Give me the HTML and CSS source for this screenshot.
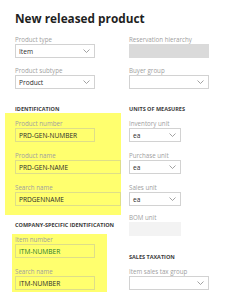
FILE: index.html
```html
<!DOCTYPE html>
<html>
<head>
<meta charset="utf-8">
<link rel="stylesheet" href="styles.css">
</head>
<body>
<div class="page">
  <h1 class="title">New released product</h1>
  <div class="cols">
    <div class="col left">
      <div class="field">
        <div class="label">Product type</div>
        <div class="box w80"><span>Item</span><svg class="chev" width="7" height="4" viewBox="0 0 7 4"><polyline points="0.5,0.5 3.5,3.5 6.5,0.5"/></svg></div>
      </div>
      <div class="field gap9">
        <div class="label">Product subtype</div>
        <div class="box w80"><span>Product</span><svg class="chev" width="7" height="4" viewBox="0 0 7 4"><polyline points="0.5,0.5 3.5,3.5 6.5,0.5"/></svg></div>
      </div>
      <div class="hdr hdr-first">IDENTIFICATION</div>
      <div class="hl hl-main">
        <div class="field">
          <div class="label">Product number</div>
          <div class="box hbox w80"><span>PRD-GEN-NUMBER</span></div>
        </div>
        <div class="field">
          <div class="label">Product name</div>
          <div class="box hbox w106"><span>PRD-GEN-NAME</span></div>
        </div>
        <div class="field">
          <div class="label">Search name</div>
          <div class="box hbox w106"><span>PRDGENNAME</span></div>
        </div>
      </div>
      <div class="hdr hdr-company">COMPANY-SPECIFIC IDENTIFICATION</div>
      <div class="hl hl-company">
        <div class="field">
          <div class="label">Item number</div>
          <div class="box hbox w80"><span class="green">ITM-NUMBER</span></div>
        </div>
        <div class="field">
          <div class="label">Search name</div>
          <div class="box hbox w80"><span>ITM-NUMBER</span></div>
        </div>
      </div>
    </div>
    <div class="col right">
      <div class="field">
        <div class="label">Reservation hierarchy</div>
        <div class="box w80 disabled"></div>
      </div>
      <div class="field gap9">
        <div class="label">Buyer group</div>
        <div class="box w80"><span></span><svg class="chev" width="7" height="4" viewBox="0 0 7 4"><polyline points="0.5,0.5 3.5,3.5 6.5,0.5"/></svg></div>
      </div>
      <div class="hdr hdr-first">UNITS OF MEASURES</div>
      <div class="units">
        <div class="field">
          <div class="label">Inventory unit</div>
          <div class="box w52"><span>ea</span><svg class="chev" width="7" height="4" viewBox="0 0 7 4"><polyline points="0.5,0.5 3.5,3.5 6.5,0.5"/></svg></div>
        </div>
        <div class="field">
          <div class="label">Purchase unit</div>
          <div class="box w52"><span>ea</span><svg class="chev" width="7" height="4" viewBox="0 0 7 4"><polyline points="0.5,0.5 3.5,3.5 6.5,0.5"/></svg></div>
        </div>
        <div class="field">
          <div class="label">Sales unit</div>
          <div class="box w52"><span>ea</span><svg class="chev" width="7" height="4" viewBox="0 0 7 4"><polyline points="0.5,0.5 3.5,3.5 6.5,0.5"/></svg></div>
        </div>
        <div class="field bom">
          <div class="label">BOM unit</div>
          <div class="box w52 readonly"></div>
        </div>
      </div>
      <div class="hdr hdr-tax">SALES TAXATION</div>
      <div class="field tax">
        <div class="label">Item sales tax group</div>
        <div class="box w80"><span></span><svg class="chev" width="7" height="4" viewBox="0 0 7 4"><polyline points="0.5,0.5 3.5,3.5 6.5,0.5"/></svg></div>
      </div>
    </div>
  </div>
</div>
</body>
</html>
```

FILE: styles.css
```css
html, body {
  margin: 0;
  padding: 0;
  background: #ffffff;
}
body {
  font-family: "Open Sans", "Noto Sans", sans-serif;
  color: #333333;
}
.page {
  width: 247px;
  height: 300px;
  overflow: hidden;
  padding-left: 15px;
  box-sizing: border-box;
}
.title {
  margin: 0;
  padding-top: 11px;
  height: 36px;
  box-sizing: border-box;
  font-size: 11.8px;
  line-height: 14px;
  font-weight: 700;
  color: #1f1f1f;
  white-space: nowrap;
}
.cols {
  display: flex;
}
.col {
  display: flex;
  flex-direction: column;
}
.left {
  width: 114px;
}
.right {
  width: 100px;
}
.field {
  display: flex;
  flex-direction: column;
}
.gap9 {
  margin-top: 9px;
}
.label {
  font-size: 6.2px;
  line-height: 8px;
  height: 8px;
  color: #a0a0a0;
  white-space: nowrap;
}
.box {
  height: 14px;
  box-sizing: border-box;
  border: 1px solid #d2d2d2;
  background: #ffffff;
  display: flex;
  align-items: center;
  justify-content: space-between;
  padding: 0 3px 0 3px;
  font-size: 6.6px;
  color: #2b2b2b;
  white-space: nowrap;
}
.w80 { width: 80px; }
.w106 { width: 106px; }
.w52 { width: 52px; }
.chev {
  display: block;
  fill: none;
  stroke: #8a8a8a;
  stroke-width: 0.8;
  margin-right: 1px;
}
.disabled {
  background: #dadada;
  border-color: #dadada;
}
.readonly {
  background: #f3f3f3;
  border-color: #f3f3f3;
}
.hdr {
  font-size: 5.5px;
  line-height: 7px;
  height: 7px;
  font-weight: 700;
  color: #3c3c3c;
  white-space: nowrap;
}
.hdr-first {
  margin-top: 17px;
}
.hl {
  background: #ffff6e;
  display: flex;
  flex-direction: column;
  gap: 10px;
  box-sizing: border-box;
}
.hl-main {
  margin-left: -10px;
  width: 116px;
  padding: 7px 0 9px 10px;
}
.hl-company {
  margin-top: 5px;
  margin-left: -3px;
  width: 95px;
  padding: 2px 0 2px 3px;
}
.hbox {
  background: transparent;
  border-color: #dede88;
}
.green {
  color: #1e7d2a;
}
.hdr-company {
  margin-top: 7px;
}
.units {
  margin-top: 7px;
  display: flex;
  flex-direction: column;
  gap: 10px;
}
.units .bom {
  margin-top: -2px;
}
.hdr-tax {
  margin-top: 18px;
}
.tax {
  margin-top: 7px;
}
```
